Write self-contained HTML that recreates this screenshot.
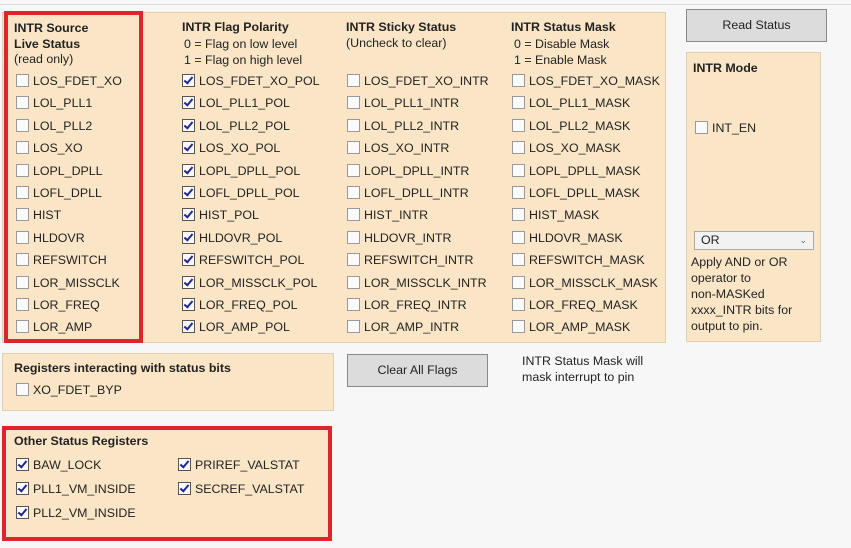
<!DOCTYPE html><html><head><style>
body{margin:0;width:851px;height:548px;background:#f7f7f7;font-family:"Liberation Sans",sans-serif;font-size:12.4px;color:#222;position:relative;overflow:hidden}
.a{position:absolute;white-space:nowrap}
.p{position:absolute;background:#fae6c6;border:1px solid #e2cfae;box-sizing:border-box}
.r{position:absolute;border:4px solid #e0242b;box-sizing:border-box}
.b{font-weight:bold}
.cb{display:inline-block;width:11px;height:11px;border:1px solid #999;background:#fafafa;vertical-align:-2px;margin-right:4px;position:relative}
.cb.c{border-color:#555}
.cb.c::after{content:"";position:absolute;left:3px;top:0px;width:3px;height:7px;border:solid #22239a;border-width:0 2px 2px 0;transform:rotate(40deg)}
.btn{position:absolute;background:#dcdcdc;border:1px solid #888;box-sizing:border-box;text-align:center;font-size:12.4px}
</style></head><body>
<div class="a" style="left:0;top:4px;width:851px;height:1px;background:#ddd"></div>
<div class="p" style="left:2px;top:12px;width:664px;height:331px"></div>
<div class="r" style="left:4px;top:11px;width:139px;height:332px"></div>
<div class="a b" style="left:14px;top:20px;line-height:16px">INTR Source<br>Live Status</div>
<div class="a" style="left:14px;top:52px">(read only)</div>
<div class="a b" style="left:182px;top:20px">INTR Flag Polarity</div>
<div class="a" style="left:184px;top:36px;line-height:16px">0 = Flag on low level<br>1 = Flag on high level</div>
<div class="a b" style="left:346px;top:20px">INTR Sticky Status</div>
<div class="a" style="left:346px;top:36px">(Uncheck to clear)</div>
<div class="a b" style="left:511px;top:20px">INTR Status Mask</div>
<div class="a" style="left:514px;top:36px;line-height:16px">0 = Disable Mask<br>1 = Enable Mask</div>
<div id="rows"></div>
<div class="btn" style="left:686px;top:9px;width:141px;height:33px;line-height:31px">Read Status</div>
<div class="p" style="left:686px;top:52px;width:135px;height:290px"></div>
<div class="a b" style="left:693px;top:61px">INTR Mode</div>
<div class="a" style="left:695px;top:121px"><span class="cb"></span>INT_EN</div>
<div class="a" style="left:694px;top:231px;width:120px;height:19px;background:#f2f2f2;border:1px solid #aaa;box-sizing:border-box;padding-left:6px;line-height:17px">OR<span style="position:absolute;right:6px;font-size:9px;color:#666">&#8964;</span></div>
<div class="a" style="left:691px;top:254px;line-height:16px">Apply AND or OR<br>operator to<br>non-MASKed<br>xxxx_INTR bits for<br>output to pin.</div>
<div class="p" style="left:2px;top:353px;width:332px;height:58px"></div>
<div class="a b" style="left:14px;top:361px">Registers interacting with status bits</div>
<div class="a" style="left:16px;top:383px"><span class="cb"></span>XO_FDET_BYP</div>
<div class="btn" style="left:347px;top:354px;width:141px;height:33px;line-height:31px">Clear All Flags</div>
<div class="a" style="left:522px;top:353px;line-height:16px">INTR Status Mask will<br>mask interrupt to pin</div>
<div class="p" style="left:2px;top:426px;width:330px;height:115px"></div>
<div class="r" style="left:2px;top:426px;width:330px;height:115px"></div>
<div class="a b" style="left:14px;top:434px">Other Status Registers</div>
<div class="a" style="left:16px;top:458px"><span class="cb c"></span>BAW_LOCK</div>
<div class="a" style="left:16px;top:482px"><span class="cb c"></span>PLL1_VM_INSIDE</div>
<div class="a" style="left:16px;top:506px"><span class="cb c"></span>PLL2_VM_INSIDE</div>
<div class="a" style="left:178px;top:458px"><span class="cb c"></span>PRIREF_VALSTAT</div>
<div class="a" style="left:178px;top:482px"><span class="cb c"></span>SECREF_VALSTAT</div>
<script>
var n=["LOS_FDET_XO","LOL_PLL1","LOL_PLL2","LOS_XO","LOPL_DPLL","LOFL_DPLL","HIST","HLDOVR","REFSWITCH","LOR_MISSCLK","LOR_FREQ","LOR_AMP"];
var h="";n.forEach(function(s,i){var y=74+i*22.4;
h+='<div class="a" style="left:16px;top:'+y+'px"><span class="cb"></span>'+s+'</div>';
h+='<div class="a" style="left:182px;top:'+y+'px"><span class="cb c"></span>'+s+'_POL</div>';
h+='<div class="a" style="left:347px;top:'+y+'px"><span class="cb"></span>'+s+'_INTR</div>';
h+='<div class="a" style="left:512px;top:'+y+'px"><span class="cb"></span>'+s+'_MASK</div>';});
document.getElementById("rows").innerHTML=h;
</script>
</body></html>
